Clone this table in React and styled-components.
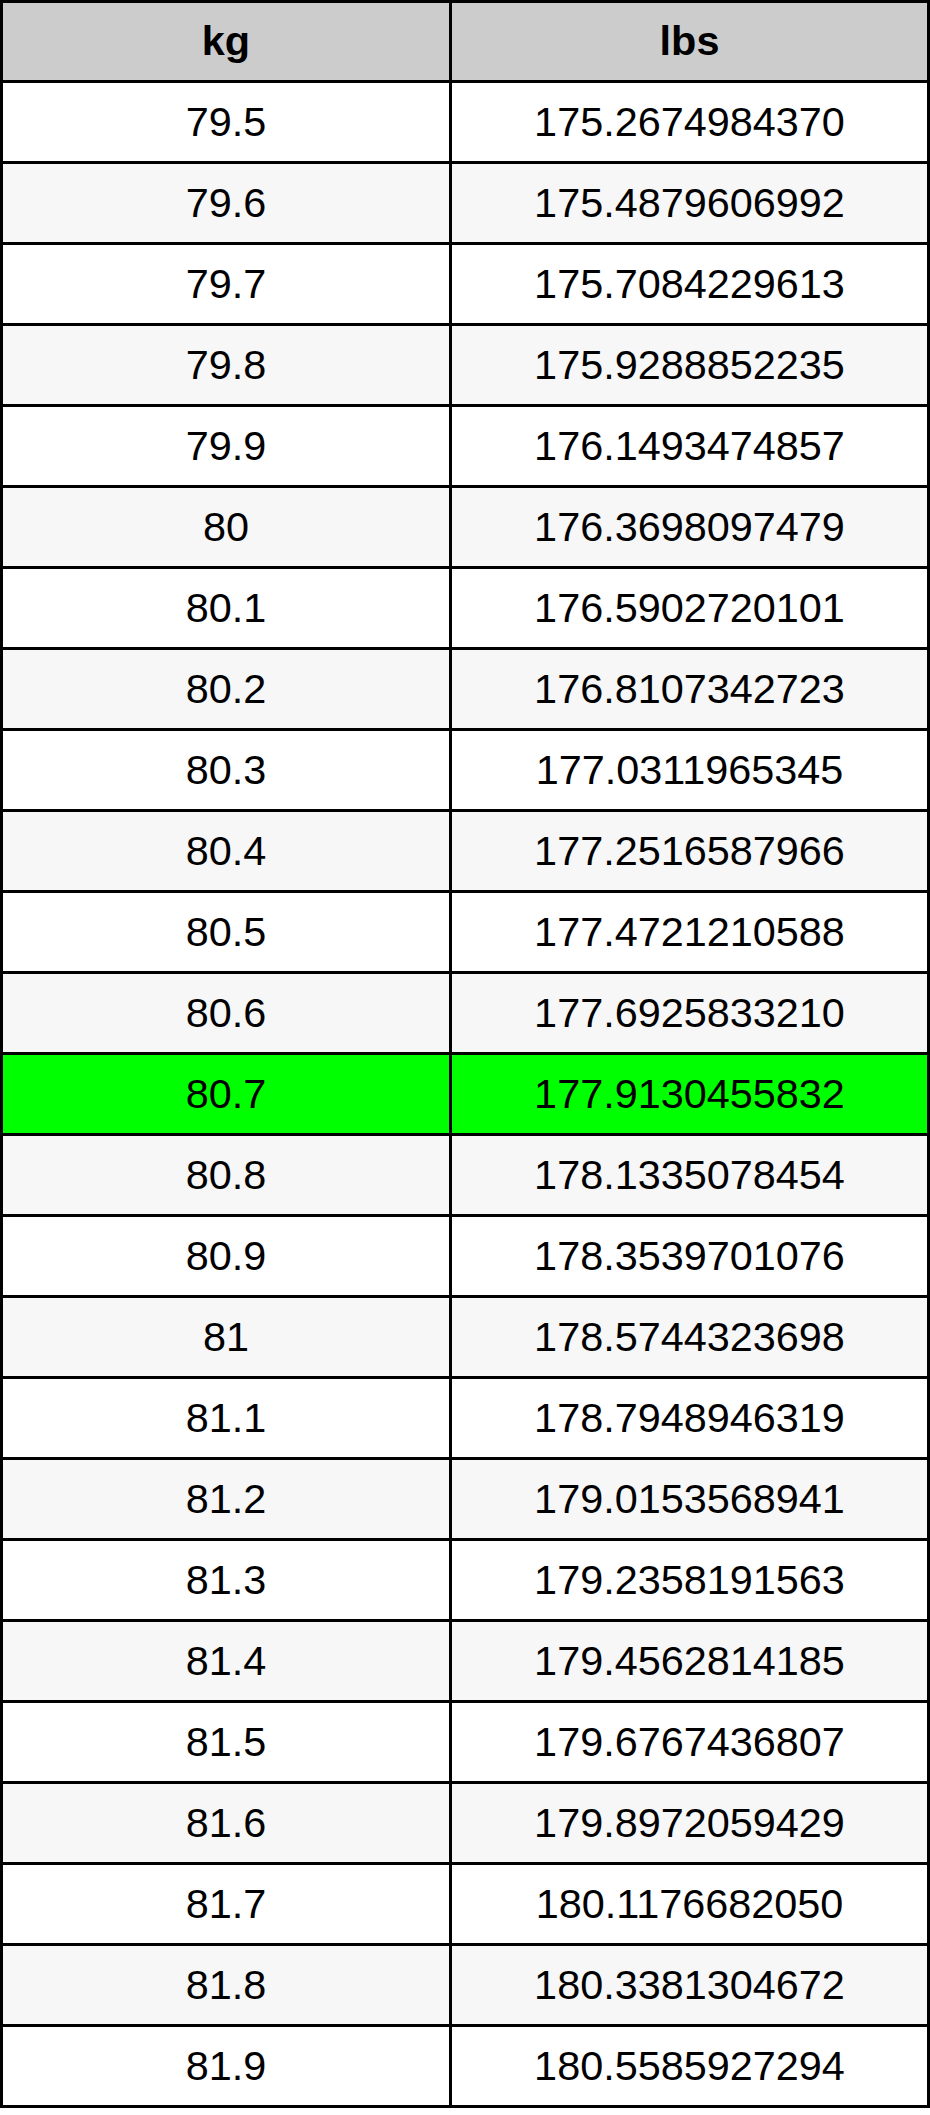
import React from "react";
import styled, { createGlobalStyle } from "styled-components";

const GlobalStyle = createGlobalStyle`
  html, body {
    margin: 0;
    padding: 0;
    background: #ffffff;
  }
  body {
    font-family: "Liberation Sans", Arial, sans-serif;
    color: #000;
  }
`;

const Table = styled.div`
  width: 930px;
  box-sizing: border-box;
  border: 3px solid #000;
  display: flex;
  flex-direction: column;
`;

const Row = styled.div`
  display: grid;
  grid-template-columns: 446px 1fr;
  background: ${(p) =>
    p.$variant === "header"
      ? "#cccccc"
      : p.$variant === "highlight"
      ? "#00ff00"
      : p.$variant === "alt"
      ? "#f7f7f7"
      : "#ffffff"};
  & + & {
    border-top: 3px solid #000;
  }
`;

const Cell = styled.div`
  height: ${(p) => (p.$header ? "77px" : "78px")};
  display: flex;
  align-items: center;
  justify-content: center;
  font-size: 41.4px;
  font-weight: ${(p) => (p.$header ? 700 : 400)};
  font-family: "Liberation Sans", Arial, sans-serif;
  & + & {
    border-left: 3px solid #000;
  }
`;

const rows = [
  ["79.5", "175.2674984370"],
  ["79.6", "175.4879606992"],
  ["79.7", "175.7084229613"],
  ["79.8", "175.9288852235"],
  ["79.9", "176.1493474857"],
  ["80", "176.3698097479"],
  ["80.1", "176.5902720101"],
  ["80.2", "176.8107342723"],
  ["80.3", "177.0311965345"],
  ["80.4", "177.2516587966"],
  ["80.5", "177.4721210588"],
  ["80.6", "177.6925833210"],
  ["80.7", "177.9130455832"],
  ["80.8", "178.1335078454"],
  ["80.9", "178.3539701076"],
  ["81", "178.5744323698"],
  ["81.1", "178.7948946319"],
  ["81.2", "179.0153568941"],
  ["81.3", "179.2358191563"],
  ["81.4", "179.4562814185"],
  ["81.5", "179.6767436807"],
  ["81.6", "179.8972059429"],
  ["81.7", "180.1176682050"],
  ["81.8", "180.3381304672"],
  ["81.9", "180.5585927294"],
];

export default function App() {
  return (
    <>
      <GlobalStyle />
      <Table>
        <Row $variant="header">
          <Cell $header>kg</Cell>
          <Cell $header>lbs</Cell>
        </Row>
        {rows.map(([kg, lbs], i) => (
          <Row
            key={kg}
            $variant={kg === "80.7" ? "highlight" : i % 2 === 1 ? "alt" : "plain"}
          >
            <Cell>{kg}</Cell>
            <Cell>{lbs}</Cell>
          </Row>
        ))}
      </Table>
    </>
  );
}
